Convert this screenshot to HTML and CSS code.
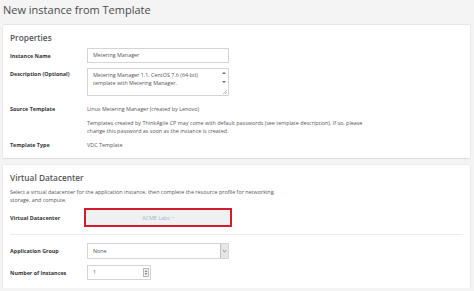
FILE: index.html
```html
<!DOCTYPE html>
<html>
<head>
<meta charset="utf-8">
<link rel="stylesheet" href="styles.css">
</head>
<body>
<div class="page">
  <h1 class="title">New instance from Template</h1>
  <section class="card card-props">
    <h2 class="card-title">Properties</h2>
    <div class="row row-name">
      <div class="label">Instance Name</div>
      <div class="field input-text">Metering Manager</div>
    </div>
    <div class="row row-desc">
      <div class="label label-top">Description (Optional)</div>
      <div class="field textarea">
        <div class="ta-text">Metering Manager 1.1. CentOS 7.6 (64-bit)<br>template with Metering Manager.</div>
        <div class="ta-scroll"><span class="ta-up"></span><span class="ta-down"></span></div>
        <span class="ta-grip"></span>
      </div>
    </div>
    <div class="row row-source">
      <div class="label">Source Template</div>
      <div class="value">Linux Metering Manager (created by Lenovo)</div>
    </div>
    <div class="note">Templates created by ThinkAgile CP may come with default passwords (see template description). If so, please<br>change this password as soon as the instance is created.</div>
    <div class="row row-type">
      <div class="label">Template Type</div>
      <div class="value">VDC Template</div>
    </div>
  </section>
  <section class="card card-vdc">
    <h2 class="card-title">Virtual Datacenter</h2>
    <p class="desc">Select a virtual datacenter for the application instance, then complete the resource profile for networking,<br>storage, and compute.</p>
    <div class="row row-vdc">
      <div class="label">Virtual Datacenter</div>
      <div class="highlight"><div class="vdc-btn">ACME Labs <span class="caret"></span></div></div>
    </div>
    <div class="sep"></div>
    <div class="row row-group">
      <div class="label">Application Group</div>
      <div class="field select">None<span class="sel-arrow"><svg width="5" height="4" viewBox="0 0 5 4"><path d="M0.8 1.2 L2.5 2.8 L4.2 1.2" fill="none" stroke="#666" stroke-width="0.8"/></svg></span></div>
    </div>
    <div class="row row-count">
      <div class="label">Number of Instances</div>
      <div class="field number">1<span class="spin"><svg width="5" height="9" viewBox="0 0 5 9"><path d="M1 3.5 L2.5 1.8 L4 3.5 Z M1 5.5 L2.5 7.2 L4 5.5 Z" fill="#555"/></svg></span></div>
    </div>
  </section>
</div>
</body>
</html>
```
FILE: styles.css
```css
* { box-sizing: border-box; margin: 0; padding: 0; }
html, body { background: #f4f4f4; }
body {
  font-family: "Open Sans", "DejaVu Sans", sans-serif;
  color: #555;
  font-size: 5.4px;
}
.page { padding: 0 4px 0 3px; }
.title {
  font-weight: 400;
  font-size: 11px;
  line-height: 20px;
  height: 25px;
  color: #4a4a4a;
  border-bottom: 1px solid #ececec;
}
.card {
  background: #fff;
  box-shadow: 0 0 1px rgba(0,0,0,0.18), 0 1px 1px rgba(0,0,0,0.06);
  padding: 6px 7px 9px 7px;
}
.card-vdc { margin-top: 7px; padding-bottom: 8px; }
.card-title {
  font-weight: 600;
  font-size: 8.3px;
  line-height: 14px;
  color: #555;
}
.row { display: flex; align-items: center; }
.label {
  width: 77px;
  flex: none;
  font-weight: 700;
  color: #333;
  line-height: 8px;
}
.label-top { align-self: flex-start; padding-top: 2px; }
.value { line-height: 8px; color: #555; }
.field {
  border: 1px solid #d4d4d4;
  background: #fff;
  color: #555;
  position: relative;
}
.input-text {
  width: 142px; height: 15px;
  padding-left: 5px;
  line-height: 13px;
}
.row-name { margin-top: 3px; }
.row-desc { margin-top: 5px; }
.textarea {
  width: 142px; height: 28px;
  padding: 2px 5px;
}
.ta-text { line-height: 8px; }
.ta-scroll {
  position: absolute; right: 1px; top: 1px; width: 6px; height: 18px;
}
.ta-up, .ta-down {
  position: absolute; left: 1px; width: 0; height: 0;
  border-left: 2px solid transparent; border-right: 2px solid transparent;
}
.ta-up { top: 2px; border-bottom: 2px solid #666; }
.ta-down { top: 11px; border-top: 2px solid #666; }
.ta-grip {
  position: absolute; right: 1px; bottom: 1px; width: 4px; height: 4px;
  background: linear-gradient(135deg, transparent 45%, #bbb 45%, #bbb 55%, transparent 55%, transparent 70%, #bbb 70%, #bbb 80%, transparent 80%);
}
.row-source { margin-top: 9px; }
.note {
  margin: 6px 0 0 77px;
  line-height: 8px;
  color: #555;
}
.row-type { margin-top: 6px; }
.desc { line-height: 7.5px; margin-top: 4px; color: #555; }
.row-vdc { margin-top: 4px; }
.highlight {
  margin-left: -3px;
  width: 148px; height: 19px;
  border: 2px solid #d41a2c;
  background: #fff;
}
.vdc-btn {
  height: 100%;
  background: #eef0f2;
  color: #9db4cc;
  display: flex; align-items: center; justify-content: center;
}
.caret {
  display: inline-block; width: 0; height: 0; margin-left: 2px;
  border-left: 1.5px solid transparent; border-right: 1.5px solid transparent;
  border-top: 1.5px solid #9db4cc;
}
.sep { height: 1px; background: #ececec; margin-top: 7px; }
.row-group { margin-top: 8px; }
.select {
  width: 142px; height: 16px;
  padding-left: 5px;
  line-height: 14px;
}
.sel-arrow {
  position: absolute; right: 0; top: 0; width: 8px; height: 14px;
  background: #e6e6e6; border-left: 1px solid #c0c0c0;
  display: flex; align-items: center; justify-content: center;
}
.row-count { margin-top: 6px; }
.number {
  width: 64px; height: 15px;
  padding-left: 5px;
  line-height: 13px;
}
.spin {
  position: absolute; right: 1px; top: 2px; width: 6px; height: 9px;
  background: #f0f0f0; border: 1px solid #bbb;
  display: flex; align-items: center; justify-content: center;
}
```
